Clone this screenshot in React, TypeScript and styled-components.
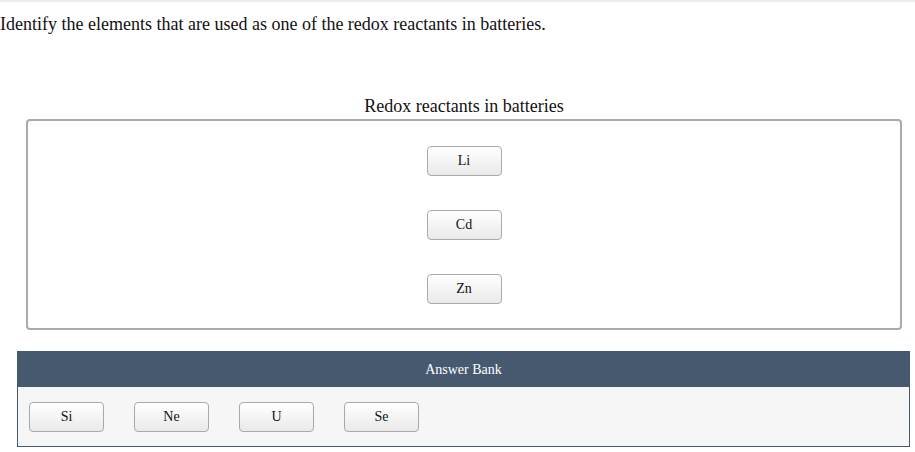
import React from "react";
import styled, { createGlobalStyle } from "styled-components";

const Global = createGlobalStyle`
  html, body { margin: 0; padding: 0; background: #fff; }
  body { font-family: "Liberation Serif", "Times New Roman", serif; color: #111; }
`;

const Page = styled.div`
  width: 915px;
  height: 452px;
  border-top: 2px solid #ececec;
  box-sizing: border-box;
  overflow: hidden;
`;

const Prompt = styled.p`
  margin: 0;
  padding: 12px 0 0 0;
  font-size: 18px;
  line-height: 21px;
`;

const Target = styled.section`
  margin: 61px 0 0 26px;
  width: 876px;
  display: flex;
  flex-direction: column;
  align-items: center;
`;

const TargetTitle = styled.div`
  font-size: 18px;
  line-height: 21px;
  margin-bottom: 2px;
`;

const DropBox = styled.div`
  box-sizing: border-box;
  width: 876px;
  height: 211px;
  border: 2px solid #aaaaaa;
  border-radius: 4px;
  display: flex;
  flex-direction: column;
  align-items: center;
  padding-top: 25px;
  gap: 34px;
`;

const Chip = styled.div`
  box-sizing: border-box;
  width: 75px;
  height: 30px;
  border: 1px solid #a9a9a9;
  border-radius: 4px;
  background: linear-gradient(#ffffff, #e9e9e9);
  display: flex;
  align-items: center;
  justify-content: center;
  font-size: 14px;
  color: #111;
`;

const Bank = styled.section`
  margin: 21px 0 0 17px;
  width: 893px;
  box-sizing: border-box;
  border: 1px solid #44576b;
`;

const BankHeader = styled.div`
  height: 35px;
  background: #46596e;
  color: #fff;
  font-size: 14px;
  display: flex;
  align-items: center;
  justify-content: center;
`;

const BankBody = styled.div`
  background: #f6f6f6;
  height: 59px;
  box-sizing: border-box;
  padding: 15px 0 0 11px;
  display: flex;
  gap: 30px;
`;

export default function App() {
  const placed = ["Li", "Cd", "Zn"];
  const bank = ["Si", "Ne", "U", "Se"];
  return (
    <>
      <Global />
      <Page>
        <Prompt>Identify the elements that are used as one of the redox reactants in batteries.</Prompt>
        <Target>
          <TargetTitle>Redox reactants in batteries</TargetTitle>
          <DropBox>
            {placed.map((p) => (
              <Chip key={p}>{p}</Chip>
            ))}
          </DropBox>
        </Target>
        <Bank>
          <BankHeader>Answer Bank</BankHeader>
          <BankBody>
            {bank.map((b) => (
              <Chip key={b}>{b}</Chip>
            ))}
          </BankBody>
        </Bank>
      </Page>
    </>
  );
}
